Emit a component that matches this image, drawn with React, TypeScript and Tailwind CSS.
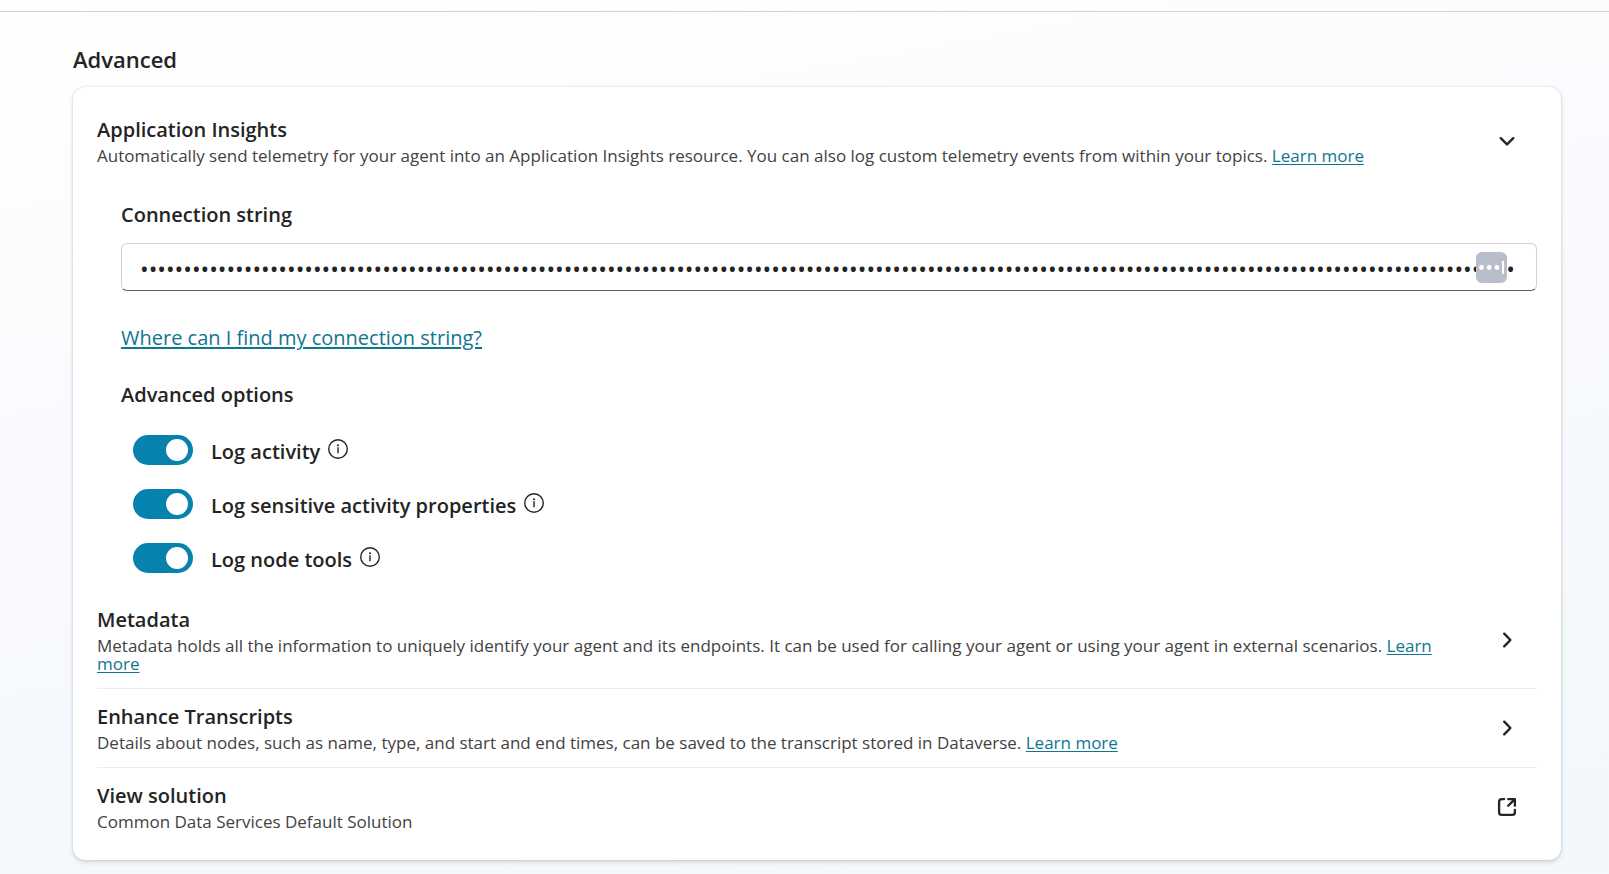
import { useState } from "react";
import type { ReactNode } from "react";

function LearnMore() {
  return (
    <a href="#" className="text-[#0f7690] underline underline-offset-2">
      Learn more
    </a>
  );
}

function Chevron({ down = false }: { down?: boolean }) {
  return (
    <svg
      viewBox="0 0 20 20"
      className={down ? "size-5 rotate-90" : "size-5"}
      fill="none"
      stroke="currentColor"
      strokeWidth="2.4"
      strokeLinecap="round"
      strokeLinejoin="round"
    >
      <path d="M7.2 3.7 13.4 10 7.2 16.3" />
    </svg>
  );
}

function OpenIcon() {
  return (
    <svg
      viewBox="0 0 20 20"
      className="size-5"
      fill="none"
      stroke="currentColor"
      strokeWidth="2.3"
      strokeLinecap="round"
      strokeLinejoin="round"
    >
      <path d="M7.2 2.1H4.8A2.7 2.7 0 0 0 2.1 4.8v10.4a2.7 2.7 0 0 0 2.7 2.7h10.4a2.7 2.7 0 0 0 2.7-2.7v-2.4" />
      <path d="M11.2 2.1h6.7v6.7M17.6 2.4 11.2 8.8" />
    </svg>
  );
}

function InfoIcon() {
  return (
    <svg viewBox="0 0 20 20" className="size-5" fill="none">
      <circle cx="10" cy="10" r="9.3" stroke="currentColor" strokeWidth="1.4" />
      <path d="M10 8.8v5" stroke="currentColor" strokeWidth="1.4" strokeLinecap="round" />
      <circle cx="10" cy="6.3" r="1" fill="currentColor" />
    </svg>
  );
}

type RowProps = {
  title: string;
  icon: ReactNode;
  children: ReactNode;
  border?: boolean;
};

function SettingRow({ title, icon, children, border = false }: RowProps) {
  return (
    <div
      className={
        border ? "flex items-center border-b border-[#ededed] pt-[13px] pb-[15px]" : "flex items-center pt-[13px] pb-[15px]"
      }
    >
      <div className="min-w-0 flex-1">
        <h3 className="text-[20px] leading-[30px] font-semibold">{title}</h3>
        <p className="mt-0.5 text-[17px] leading-[18px] text-[#424242]">{children}</p>
      </div>
      <button type="button" aria-label={title} className="mt-0.5 flex h-10 w-15 items-center justify-center">
        {icon}
      </button>
    </div>
  );
}

function Toggle({ id, label }: { id: string; label: string }) {
  const [checked, setChecked] = useState(true);

  return (
    <div className="flex h-[30px] items-center">
      <input
        id={id}
        type="checkbox"
        role="switch"
        checked={checked}
        onChange={() => setChecked(!checked)}
        className="flex h-[30px] w-[60px] appearance-none items-center rounded-full bg-[#8a8a8a] px-[5px] after:size-[22px] after:rounded-full after:bg-white checked:justify-end checked:bg-[#0781ae]"
      />
      <label htmlFor={id} className="ml-[18px] pt-1 text-[20px] font-semibold">
        {label}
      </label>
      <button type="button" aria-label={`About ${label}`} className="mb-0.5 ml-2">
        <InfoIcon />
      </button>
    </div>
  );
}

const options = [
  { id: "log-activity", label: "Log activity" },
  { id: "log-sensitive", label: "Log sensitive activity properties" },
  { id: "log-node-tools", label: "Log node tools" },
];

export default function App() {
  const [connection, setConnection] = useState("x".repeat(159));

  return (
    <div className="min-h-screen bg-linear-170 from-white via-[#f9fafe] via-45% to-[#f2f8fb] to-90% font-['Segoe_UI','Open_Sans',sans-serif] text-[#242424]">
      <header className="h-3 border-b border-[#d1d1d1]" />
      <main className="pt-[31px] pr-12 pb-3 pl-[73px]">
        <h2 className="mb-3 text-[22px] leading-8 font-semibold">Advanced</h2>
        <section className="rounded-xl bg-white px-6 pt-[15px] pb-3.5 shadow-[0_0_2px_rgba(0,0,0,0.16),0_2px_5px_rgba(0,0,0,0.14)]">
          <SettingRow title="Application Insights" icon={<Chevron down />}>
            Automatically send telemetry for your agent into an Application Insights resource. You can also log custom
            telemetry events from within your topics. <LearnMore />
          </SettingRow>

          <div className="mt-5 mb-[19px] pl-6">
            <label htmlFor="connection" className="block text-[20px] leading-[30px] font-semibold">
              Connection string
            </label>
            <div className="relative mt-[13px]">
              <input
                id="connection"
                type="password"
                value={connection}
                onChange={(e) => setConnection(e.target.value)}
                className="block h-12 w-full rounded-md border border-[#d1d1d1] border-b-[#616161] bg-white px-[18px] pt-1 text-[23px] outline-none"
              />
              <button
                type="button"
                aria-label="Fill password"
                className="absolute top-[9px] right-[30px] flex size-[31px] items-center justify-center rounded-md bg-[#b8bfcb]"
              >
                <svg viewBox="0 0 31 31" className="size-full" fill="white">
                  <circle cx="5.5" cy="15.5" r="2.4" />
                  <circle cx="13.2" cy="15.5" r="2.4" />
                  <circle cx="20.9" cy="15.5" r="2.4" />
                  <rect x="26" y="9" width="2" height="13" />
                </svg>
              </button>
            </div>
            <a
              href="#"
              className="mt-8 inline-block text-[20px] leading-[30px] text-[#0f7690] underline decoration-2 underline-offset-2"
            >
              Where can I find my connection string?
            </a>
            <h3 className="mt-[27px] text-[20px] leading-[30px] font-semibold">Advanced options</h3>
            <div className="mt-[25px] flex flex-col gap-6 pl-3">
              {options.map((option) => (
                <Toggle key={option.id} {...option} />
              ))}
            </div>
          </div>

          <SettingRow title="Metadata" icon={<Chevron />} border>
            Metadata holds all the information to uniquely identify your agent and its endpoints. It can be used for
            calling your agent or using your agent in external scenarios. <LearnMore />
          </SettingRow>
          <SettingRow title="Enhance Transcripts" icon={<Chevron />} border>
            Details about nodes, such as name, type, and start and end times, can be saved to the transcript stored in
            Dataverse. <LearnMore />
          </SettingRow>
          <SettingRow title="View solution" icon={<OpenIcon />}>
            Common Data Services Default Solution
          </SettingRow>
        </section>
      </main>
    </div>
  );
}
